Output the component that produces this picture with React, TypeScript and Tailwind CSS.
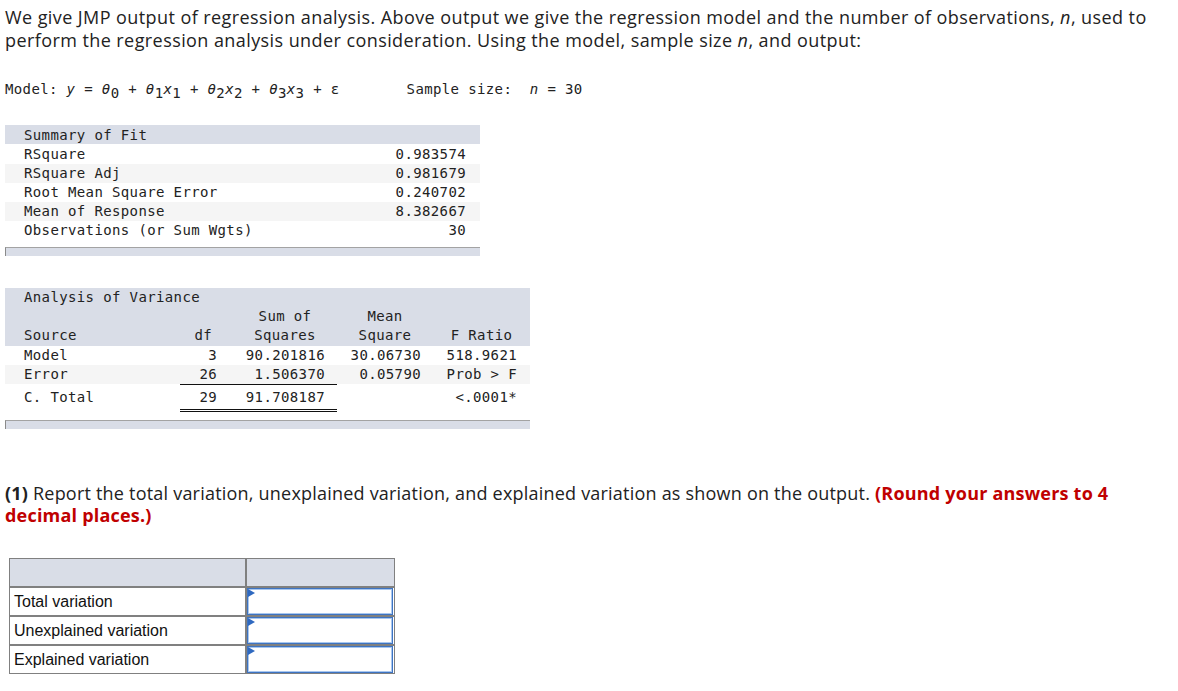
import React from "react";

const mono = "font-['DejaVu_Sans_Mono',monospace] text-[14px] tracking-[0.37px] leading-[19px] text-[#222]";

function SumRow({ label, value, alt }: { label: string; value: string; alt?: boolean }) {
  return (
    <div className={`flex h-[19px] pl-[19px] pr-[14px] ${alt ? "bg-[#f5f5f5]" : ""}`}>
      <span className="flex-1 whitespace-pre">{label}</span>
      <span className="whitespace-pre">{value}</span>
    </div>
  );
}

function BottomBar({ w }: { w: string }) {
  return <div className={`${w} h-[9px] border-t border-l border-t-[#a3a3a3] border-l-[#8a8a8a] bg-[#d9dde7]`} />;
}

function AnovaRow({
  c,
  alt,
  total,
}: {
  c: [string, string, string, string, string];
  alt?: boolean;
  total?: boolean;
}) {
  return (
    <div className={`flex ${alt ? "bg-[#f5f5f5]" : ""} ${total ? "h-[28px]" : "h-[19px]"}`}>
      <div className={`w-[175px] pl-[19px] whitespace-pre ${total ? "pt-[4px]" : ""}`}>{c[0]}</div>
      <div
        className={`flex ${total ? "border-t border-b-[3px] border-double border-t-[#111] border-b-[#111] pt-[3px]" : ""}`}
      >
        <div className="w-[37px] text-right">{c[1]}</div>
        <div className="w-[120px] pl-[28px] pr-[12px] text-right">{c[2]}</div>
      </div>
      <div className={`w-[84px] text-right whitespace-pre ${total ? "pt-[4px]" : ""}`}>{c[3]}</div>
      <div className={`w-[96px] text-right whitespace-pre ${total ? "pt-[4px]" : ""}`}>{c[4]}</div>
    </div>
  );
}

function InputCell() {
  return (
    <div className="relative h-full w-full pr-[1px]">
      <div className="h-full w-full border border-[#3e74c2] shadow-[inset_0_0_0_1px_#a9c7ef] bg-white" />
      <div className="absolute left-[1px] top-[1px] w-0 h-0 border-l-[7px] border-l-[#2f69c0] border-y-[4px] border-y-transparent" />
    </div>
  );
}

export default function App() {
  const cell = "border border-[#808080] h-[29px]";
  return (
    <div className="w-[1178px] h-[691px] bg-white overflow-hidden">
      <div className="pl-[5px] pt-[6px] text-[18px] leading-[23px] tracking-[0.42px] text-[#222] font-['Open_Sans',sans-serif] whitespace-nowrap">
        We give JMP output of regression analysis. Above output we give the regression model and the number of
        observations, <i>n</i>, used to
        <br />
        perform the regression analysis under consideration. Using the model, sample size <i>n</i>, and output:
      </div>

      <div className={`${mono} mt-[28px] pl-[5px] h-[19px] whitespace-pre flex`}>
        <span>
          Model: <i>y</i> = <i>θ</i>
          <span className="align-sub">0</span> + <i>θ</i>
          <span className="align-sub">1</span>
          <i>x</i>
          <span className="align-sub">1</span> + <i>θ</i>
          <span className="align-sub">2</span>
          <i>x</i>
          <span className="align-sub">2</span> + <i>θ</i>
          <span className="align-sub">3</span>
          <i>x</i>
          <span className="align-sub">3</span> + ε
        </span>
        <span className="ml-[67px]">
          Sample size:{"  "}
          <i>n</i> = 30
        </span>
      </div>

      <div className={`${mono} mt-[26px] ml-[5px] w-[475px]`}>
        <div className="h-[19px] bg-[#d9dde7] pl-[19px] pt-[1px]">Summary of Fit</div>
        <div className="pt-[1px]">
          <SumRow label="RSquare" value="0.983574" />
          <SumRow label="RSquare Adj" value="0.981679" alt />
          <SumRow label="Root Mean Square Error" value="0.240702" />
          <SumRow label="Mean of Response" value="8.382667" alt />
          <SumRow label="Observations (or Sum Wgts)" value="30" />
        </div>
        <div className="mt-[7px]">
          <BottomBar w="w-[475px]" />
        </div>
      </div>

      <div className={`${mono} mt-[32px] ml-[5px] w-[525px]`}>
        <div className="bg-[#d9dde7] h-[58px]">
          <div className="h-[19px] pl-[19px]">Analysis of Variance</div>
          <div className="flex h-[19px]">
            <div className="w-[212px]" />
            <div className="w-[120px] pl-[28px] pr-[12px] text-center">Sum of</div>
            <div className="w-[84px] pl-[12px] text-center">Mean</div>
          </div>
          <div className="flex h-[19px]">
            <div className="w-[175px] pl-[19px]">Source</div>
            <div className="w-[37px] text-right pr-[5px]">df</div>
            <div className="w-[120px] pl-[28px] pr-[12px] text-center">Squares</div>
            <div className="w-[84px] pl-[12px] text-center">Square</div>
            <div className="w-[96px] pl-[25px] text-center">F Ratio</div>
          </div>
        </div>
        <AnovaRow c={["Model", "3", "90.201816", "30.06730", "518.9621"]} />
        <AnovaRow c={["Error", "26", "1.506370", "0.05790", "Prob > F"]} alt />
        <AnovaRow c={["C. Total", "29", "91.708187", "", "<.0001*"]} total />
        <div className="mt-[8px]">
          <BottomBar w="w-[525px]" />
        </div>
      </div>

      <div className="mt-[53px] pl-[5px] text-[18px] leading-[22px] tracking-[0.21px] text-[#222] font-['Open_Sans',sans-serif] whitespace-nowrap">
        <b>(1)</b> Report the total variation, unexplained variation, and explained variation as shown on the output.{" "}
        <b className="text-[#c00000]">(Round your answers to 4</b>
        <br />
        <b className="text-[#c00000]">decimal places.)</b>
      </div>

      <div className="mt-[32px] ml-[9px] grid grid-cols-[237px_149px] font-['Liberation_Sans',Arial,sans-serif] text-[16px] text-[#111]">
        <div className={`${cell} bg-[#d9dde7]`} />
        <div className={`${cell} bg-[#d9dde7]`} />
        <div className={`${cell} pl-[4px] flex items-center`}>Total variation</div>
        <div className={cell}>
          <InputCell />
        </div>
        <div className={`${cell} pl-[4px] flex items-center`}>Unexplained variation</div>
        <div className={cell}>
          <InputCell />
        </div>
        <div className={`${cell} pl-[4px] flex items-center`}>Explained variation</div>
        <div className={cell}>
          <InputCell />
        </div>
      </div>
    </div>
  );
}
